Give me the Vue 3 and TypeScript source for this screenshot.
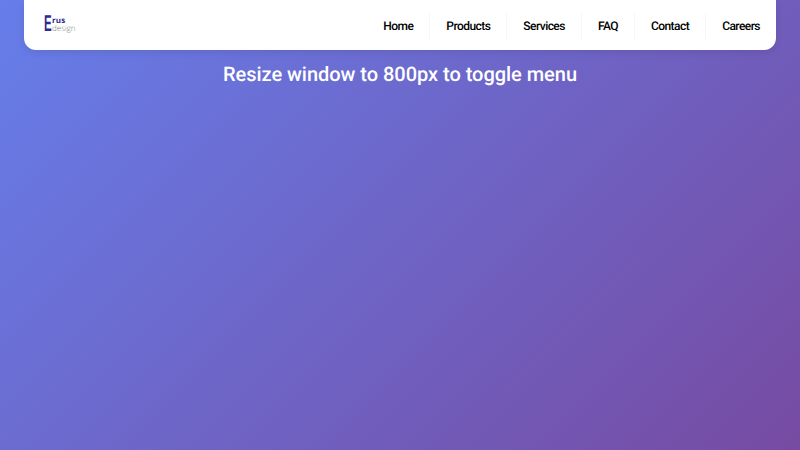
<script setup lang="ts">
const links: string[] = ['Home', 'Products', 'Services', 'FAQ', 'Contact', 'Careers']
</script>

<template>
  <div class="page">
    <header class="nav">
      <a class="logo">
        <span class="logo-e">E</span>
        <span class="logo-words">
          <span class="logo-rus">rus</span>
          <span class="logo-design">design</span>
        </span>
      </a>
      <ul class="links">
        <li v-for="link in links" :key="link" class="link">{{ link }}</li>
      </ul>
    </header>
    <h1 class="title">Resize window to 800px to toggle menu</h1>
  </div>
</template>

<style>
html, body { margin: 0; padding: 0; }
</style>

<style scoped>
.page {
  width: 800px;
  height: 450px;
  overflow: hidden;
  background: linear-gradient(135deg, #667eea 0%, #764ba2 100%);
  font-family: Roboto, sans-serif;
  text-rendering: geometricPrecision;
}
.nav {
  height: 50px;
  margin: 0 24px;
  box-sizing: border-box;
  background: #fff;
  border-radius: 0 0 12px 12px;
  box-shadow: 0 2px 8px rgba(0, 0, 0, 0.1);
  display: flex;
  align-items: center;
  justify-content: space-between;
  padding: 0 0 0 20px;
}
.logo {
  display: flex;
  align-items: flex-start;
  margin-top: -2px;
}
.logo-e {
  width: 7px;
  font-family: "Liberation Sans", sans-serif;
  font-weight: 700;
  font-size: 23px;
  line-height: 17px;
  color: #2f2a8c;
  transform: scaleX(0.5);
  transform-origin: 0 50%;
}
.logo-words {
  display: flex;
  flex-direction: column;
  margin-left: 1px;
}
.logo-rus {
  font-family: "Open Sans", sans-serif;
  font-weight: 700;
  font-size: 8px;
  line-height: 8px;
  margin-top: 2px;
  letter-spacing: 0.2px;
  color: #2f2a8c;
}
.logo-design {
  font-family: "Open Sans", sans-serif;
  font-weight: 300;
  font-size: 8px;
  line-height: 8px;
  color: #808080;
}
.links {
  display: flex;
  align-items: center;
  list-style: none;
  margin: 0;
  padding: 0;
}
.link {
  padding: 0 16px;
  height: 26px;
  line-height: 26px;
  font-size: 12px;
  font-weight: 500;
  color: #000;
  border-right: 1px solid #f6f6f6;
  margin-top: 2px;
  letter-spacing: -0.55px;
}
.link:last-child { border-right: none; }
.title {
  margin: 9px 0 0;
  text-align: center;
  font-size: 20px;
  font-weight: 500;
  line-height: 30px;
  letter-spacing: -0.03px;
  color: #fff;
}
</style>
